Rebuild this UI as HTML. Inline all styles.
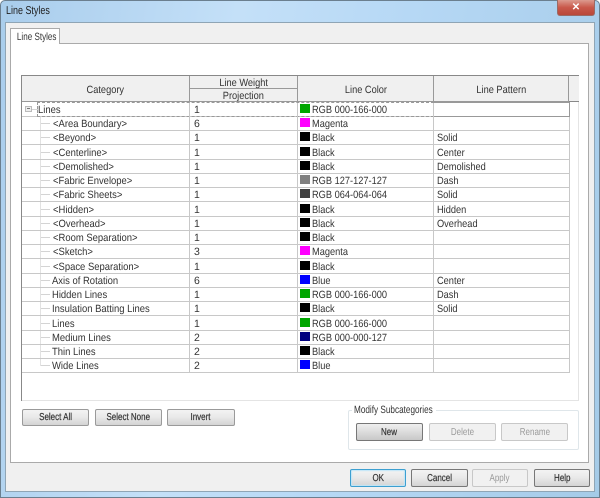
<!DOCTYPE html>
<html><head><meta charset="utf-8"><style>
html,body{margin:0;padding:0;width:600px;height:498px;overflow:hidden;background:#fff}
#w{position:absolute;left:0;top:0;width:600px;height:498px;overflow:hidden;font:10.5px "Liberation Sans",sans-serif;color:#333;filter:blur(.3px);text-rendering:geometricPrecision}
#w div{position:absolute;box-sizing:border-box;white-space:nowrap}
#w span{display:inline-block}
.fr{left:0;top:0;width:600px;height:498px;background:linear-gradient(100deg,#a9cdec 0%,#c4e0f8 35%,#b6d8f5 60%,#a5cbe8 100%);border:1px solid #6b7f8f;border-radius:5px 5px 0 0}
.in{left:5px;top:22px;width:590px;height:470px;background:#f0f0f0;border:1px solid #8fa5b5}
.pane{left:10px;top:43px;width:579px;height:420px;background:#fff;border:1px solid #aaa}
.tab{left:10px;top:28px;width:50px;height:16px;background:#fff;border:1px solid #aaa;border-bottom:0;text-align:center;line-height:16px}
.tab span{transform:scaleX(.77)}
.close{left:557px;top:0;width:38px;height:16px;background:linear-gradient(#dc9a8e,#c9584a 50%,#b9483a);border:1px solid #9a6a65;border-top:0;border-radius:0 0 3px 3px;color:#fff;font-weight:bold;font-size:10px;text-align:center;line-height:15px}
.hd{background:#f0f0f0;text-align:center;border-right:1px solid #999;border-bottom:1px solid #999}
.hd span{transform:scaleX(.88)}
.r{left:22px;width:548px;height:15px;border-bottom:1px solid #c8c8c8;line-height:16px}
.n{top:0;transform:scaleX(.9);transform-origin:left}
.a{left:172px}
.c{left:290px;transform:scaleX(.88);transform-origin:left}
.p{left:415px;transform:scaleX(.88);transform-origin:left}
.v1{left:167px;top:0;height:15px;width:1px;background:#c8c8c8}
.v2{left:275px;top:0;height:15px;width:1px;background:#c8c8c8}
.v3{left:411px;top:0;height:15px;width:1px;background:#c8c8c8}
.t{left:19px;top:7px;width:9px;height:1px;background:#d4d4d4}
.s{left:278px;top:2px;width:10px;height:9px}
.b{background:linear-gradient(#f3f3f3,#e8e8e8 50%,#d4d4d4);border:1px solid #9a9a9a;border-radius:2px;text-align:center;height:17px;line-height:16px;font-size:10px;-webkit-text-stroke:.2px #333}
.b span{transform:scaleX(.8)}
.dis{background:#f1f1f1;border-color:#c8c8c8;color:#9a9a9a;-webkit-text-stroke:0}
</style></head><body><div id="w">
<div class="fr"></div>
<div style="left:6px;top:5px;font-size:11.5px;color:#222;transform:scaleX(.78);transform-origin:left">Line Styles</div>
<div class="close">✕</div>
<div class="in"></div>
<div class="pane"></div>
<div class="tab"><span>Line Styles</span></div>

<div style="left:21px;top:75px;width:558px;height:27px;background:#f0f0f0;border-top:1px solid #888;border-left:1px solid #888;border-bottom:1px solid #888"></div>
<div style="left:21px;top:75px;width:1px;height:326px;background:#888"></div>
<div class="hd" style="left:22px;top:76px;width:168px;height:26px;line-height:28px"><span>Category</span></div>
<div class="hd" style="left:190px;top:76px;width:108px;height:13px;line-height:14px"><span>Line Weight</span></div>
<div class="hd" style="left:190px;top:89px;width:108px;height:13px;line-height:15px"><span>Projection</span></div>
<div class="hd" style="left:298px;top:76px;width:136px;height:26px;line-height:28px"><span>Line Color</span></div>
<div class="hd" style="left:434px;top:76px;width:135px;height:26px;line-height:28px"><span>Line Pattern</span></div>
<div style="left:22px;top:400px;width:557px;height:1px;background:#e4e4e4"></div>
<div style="left:578px;top:102px;width:1px;height:299px;background:#e4e4e4"></div>
<div style="left:569px;top:102px;width:1px;height:271px;background:#c8c8c8"></div>

<div style="left:40px;top:116px;width:1px;height:250px;background:#e2e2e2"></div>

<div class="r" style="top:102px"><div class="t" style="left:10px;width:6px"></div><div class="n" style="left:16px">Lines</div><div class="v1"></div><div class="a">1</div><div class="v2"></div><div class="s" style="background:#00a600"></div><div class="c">RGB 000-166-000</div><div class="v3"></div></div>
<div style="left:25px;top:106px;width:7px;height:6px;background:#eee;border:1px solid #bbb"></div>
<div style="left:27px;top:108px;width:3px;height:1px;background:#777"></div>
<div style="left:37px;top:102px;width:397px;height:15px;border:1px dashed #999;border-right:0"></div>
<div style="left:434px;top:102px;width:136px;height:15px;border:1px solid #999;border-left:0"></div>

<div class="r" style="top:116px"><div class="t"></div><div class="n" style="left:31px">&lt;Area Boundary&gt;</div><div class="v1"></div><div class="a">6</div><div class="v2"></div><div class="s" style="background:#f0f"></div><div class="c">Magenta</div><div class="v3"></div></div>
<div class="r" style="top:130px"><div class="t"></div><div class="n" style="left:31px">&lt;Beyond&gt;</div><div class="v1"></div><div class="a">1</div><div class="v2"></div><div class="s" style="background:#000"></div><div class="c">Black</div><div class="v3"></div><div class="p">Solid</div></div>
<div class="r" style="top:145px"><div class="t"></div><div class="n" style="left:31px">&lt;Centerline&gt;</div><div class="v1"></div><div class="a">1</div><div class="v2"></div><div class="s" style="background:#000"></div><div class="c">Black</div><div class="v3"></div><div class="p">Center</div></div>
<div class="r" style="top:159px"><div class="t"></div><div class="n" style="left:31px">&lt;Demolished&gt;</div><div class="v1"></div><div class="a">1</div><div class="v2"></div><div class="s" style="background:#000"></div><div class="c">Black</div><div class="v3"></div><div class="p">Demolished</div></div>
<div class="r" style="top:173px"><div class="t"></div><div class="n" style="left:31px">&lt;Fabric Envelope&gt;</div><div class="v1"></div><div class="a">1</div><div class="v2"></div><div class="s" style="background:#7f7f7f"></div><div class="c">RGB 127-127-127</div><div class="v3"></div><div class="p">Dash</div></div>
<div class="r" style="top:187px"><div class="t"></div><div class="n" style="left:31px">&lt;Fabric Sheets&gt;</div><div class="v1"></div><div class="a">1</div><div class="v2"></div><div class="s" style="background:#404040"></div><div class="c">RGB 064-064-064</div><div class="v3"></div><div class="p">Solid</div></div>
<div class="r" style="top:202px"><div class="t"></div><div class="n" style="left:31px">&lt;Hidden&gt;</div><div class="v1"></div><div class="a">1</div><div class="v2"></div><div class="s" style="background:#000"></div><div class="c">Black</div><div class="v3"></div><div class="p">Hidden</div></div>
<div class="r" style="top:216px"><div class="t"></div><div class="n" style="left:31px">&lt;Overhead&gt;</div><div class="v1"></div><div class="a">1</div><div class="v2"></div><div class="s" style="background:#000"></div><div class="c">Black</div><div class="v3"></div><div class="p">Overhead</div></div>
<div class="r" style="top:230px"><div class="t"></div><div class="n" style="left:31px">&lt;Room Separation&gt;</div><div class="v1"></div><div class="a">1</div><div class="v2"></div><div class="s" style="background:#000"></div><div class="c">Black</div><div class="v3"></div></div>
<div class="r" style="top:244px"><div class="t"></div><div class="n" style="left:31px">&lt;Sketch&gt;</div><div class="v1"></div><div class="a">3</div><div class="v2"></div><div class="s" style="background:#f0f"></div><div class="c">Magenta</div><div class="v3"></div></div>
<div class="r" style="top:259px"><div class="t"></div><div class="n" style="left:31px">&lt;Space Separation&gt;</div><div class="v1"></div><div class="a">1</div><div class="v2"></div><div class="s" style="background:#000"></div><div class="c">Black</div><div class="v3"></div></div>
<div class="r" style="top:273px"><div class="t"></div><div class="n" style="left:30px">Axis of Rotation</div><div class="v1"></div><div class="a">6</div><div class="v2"></div><div class="s" style="background:#00f"></div><div class="c">Blue</div><div class="v3"></div><div class="p">Center</div></div>
<div class="r" style="top:287px"><div class="t"></div><div class="n" style="left:30px">Hidden Lines</div><div class="v1"></div><div class="a">1</div><div class="v2"></div><div class="s" style="background:#00a600"></div><div class="c">RGB 000-166-000</div><div class="v3"></div><div class="p">Dash</div></div>
<div class="r" style="top:301px"><div class="t"></div><div class="n" style="left:30px">Insulation Batting Lines</div><div class="v1"></div><div class="a">1</div><div class="v2"></div><div class="s" style="background:#000"></div><div class="c">Black</div><div class="v3"></div><div class="p">Solid</div></div>
<div class="r" style="top:316px"><div class="t"></div><div class="n" style="left:30px">Lines</div><div class="v1"></div><div class="a">1</div><div class="v2"></div><div class="s" style="background:#00a600"></div><div class="c">RGB 000-166-000</div><div class="v3"></div></div>
<div class="r" style="top:330px"><div class="t"></div><div class="n" style="left:30px">Medium Lines</div><div class="v1"></div><div class="a">2</div><div class="v2"></div><div class="s" style="background:#00007f"></div><div class="c">RGB 000-000-127</div><div class="v3"></div></div>
<div class="r" style="top:344px"><div class="t"></div><div class="n" style="left:30px">Thin Lines</div><div class="v1"></div><div class="a">2</div><div class="v2"></div><div class="s" style="background:#000"></div><div class="c">Black</div><div class="v3"></div></div>
<div class="r" style="top:358px"><div class="t"></div><div class="n" style="left:30px">Wide Lines</div><div class="v1"></div><div class="a">2</div><div class="v2"></div><div class="s" style="background:#00f"></div><div class="c">Blue</div><div class="v3"></div></div>

<div class="b" style="left:22px;top:409px;width:67px"><span>Select All</span></div>
<div class="b" style="left:95px;top:409px;width:67px"><span>Select None</span></div>
<div class="b" style="left:167px;top:409px;width:68px"><span>Invert</span></div>

<div style="left:348px;top:410px;width:231px;height:40px;border:1px solid #dfe6ea;border-radius:2px"></div>
<div style="left:352px;top:403px;width:84px;background:#fff;padding:0 2px;line-height:15px;font-size:10.5px"><span style="transform:scaleX(.78);transform-origin:left">Modify Subcategories</span></div>
<div class="b" style="left:356px;top:423px;width:67px;height:18px;line-height:17px;background:linear-gradient(#efefef,#dcdcdc 50%,#c8c8c8);border-color:#777"><span>New</span></div>
<div class="b dis" style="left:429px;top:423px;width:67px;height:18px;line-height:17px"><span>Delete</span></div>
<div class="b dis" style="left:501px;top:423px;width:67px;height:18px;line-height:17px"><span>Rename</span></div>

<div class="b" style="left:350px;top:469px;width:56px;height:18px;line-height:17px;border-color:#3c9fd0;box-shadow:inset 0 0 1px 1px #bfe6f8"><span>OK</span></div>
<div class="b" style="left:411px;top:469px;width:57px;height:18px;line-height:17px;border-color:#777"><span>Cancel</span></div>
<div class="b dis" style="left:472px;top:469px;width:56px;height:18px;line-height:17px"><span>Apply</span></div>
<div class="b" style="left:534px;top:469px;width:56px;height:18px;line-height:17px;border-color:#777"><span>Help</span></div>
</div></body></html>
